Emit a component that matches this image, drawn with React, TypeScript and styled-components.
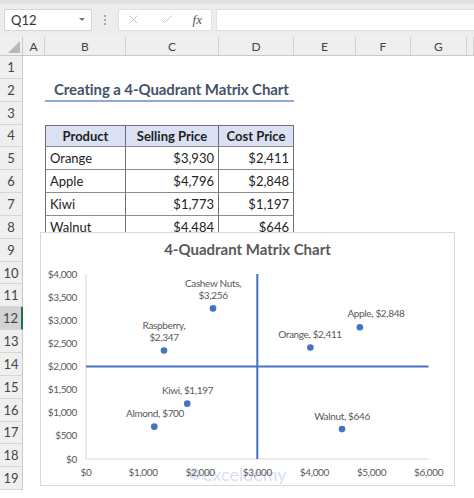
import { FC } from "react";
import styled, { createGlobalStyle } from "styled-components";
import { X, Check } from "lucide-react";

const GlobalStyle = createGlobalStyle`
  * { box-sizing: border-box; }
  body {
    margin: 0;
    font-family: Lato, "Open Sans", sans-serif;
    background: #fff;
  }
`;

const COLS = "23px 22px 81px 93px 75px 62px 55px 56px 1fr";
const ROW_H = 22.85;

const Sheet = styled.div`
  position: relative;
  width: 474px;
  height: 498px;
  overflow: hidden;
  background: #fff;
`;

const FormulaBar = styled.div`
  display: flex;
  align-items: center;
  height: 37px;
  padding: 2px 0 0 4px;
  background: linear-gradient(#e2e2e2 0 4px, #ededed 4px);
`;

const NameBox = styled.div`
  display: flex;
  align-items: center;
  justify-content: space-between;
  width: 88px;
  height: 22px;
  padding: 0 6px;
  background: #fff;
  border: 1px solid #d6d6d6;
  font-size: 13px;
  color: #333;
`;

const Caret = styled.span`
  width: 0;
  height: 0;
  border-left: 3px solid transparent;
  border-right: 3px solid transparent;
  border-top: 3px solid #777;
`;

const Grip = styled.div`
  width: 26px;
  display: flex;
  justify-content: center;
  > span {
    width: 2px;
    height: 11px;
    background: radial-gradient(circle, #a9a9a9 45%, transparent 55%) 0 0 / 2px 4px repeat-y;
  }
`;

const FxBox = styled.div`
  display: flex;
  align-items: center;
  justify-content: space-between;
  width: 94px;
  height: 22px;
  padding: 0 9px 0 7px;
  background: #fff;
  border: 1px solid #e0e0e0;
  color: #c3c3c3;
`;

const FxMark = styled.span`
  font-family: "Liberation Serif", serif;
  font-style: italic;
  font-size: 13px;
  color: #555;
`;

const FormulaInput = styled.div`
  flex: 1;
  height: 22px;
  margin-left: 4px;
  background: #fff;
  border: 1px solid #e0e0e0;
  border-right: none;
`;

const HeaderRow = styled.div`
  display: grid;
  grid-template-columns: ${COLS};
  height: 19px;
  background: #efefef;
  border-bottom: 1px solid #c9c9c9;
`;

const Corner = styled.div`
  position: relative;
  border-right: 1px solid #c9c9c9;
  &::after {
    content: "";
    position: absolute;
    right: 2px;
    bottom: 2px;
    border-left: 12px solid transparent;
    border-bottom: 12px solid #b9b9b9;
  }
`;

const ColHeader = styled.div`
  display: flex;
  align-items: center;
  justify-content: center;
  border-right: 1px solid #d2d2d2;
  font-size: 12px;
  color: #444;
`;

const Row = styled.div`
  display: grid;
  grid-template-columns: ${COLS};
  height: ${ROW_H}px;
`;

const RowHeader = styled.div<{ $active?: boolean }>`
  display: flex;
  align-items: center;
  justify-content: center;
  background: ${(p) => (p.$active ? "#d3d3d3" : "#efefef")};
  border-bottom: 1px solid #d6d6d6;
  border-right: ${(p) => (p.$active ? "2px solid #217346" : "1px solid #c9c9c9")};
  font-size: 13px;
  color: #444;
`;

const TitleCell = styled.div`
  grid-column: span 3;
  display: flex;
  align-items: center;
  padding-left: 9px;
  border-bottom: 2px solid #8ea9db;
  font-size: 15px;
  font-weight: 700;
  letter-spacing: -0.1px;
  color: #44546a;
`;

const TableCell = styled.div<{ $head?: boolean; $align?: "left" | "right" | "center"; $first?: boolean }>`
  display: flex;
  align-items: center;
  justify-content: ${(p) =>
    p.$align === "right" ? "flex-end" : p.$align === "center" ? "center" : "flex-start"};
  padding: 0 4px;
  background: ${(p) => (p.$head ? "#d9e1f2" : "#fff")};
  border-right: 1px solid #6f6f6f;
  border-bottom: 1px solid #8c8c8c;
  border-top: ${(p) => (p.$head ? "1px solid #6f6f6f" : "none")};
  border-left: ${(p) => (p.$first ? "1px solid #6f6f6f" : "none")};
  font-size: 13px;
  font-weight: ${(p) => (p.$head ? 700 : 400)};
  color: #222;
`;

const ChartBox = styled.div`
  position: absolute;
  left: 40px;
  top: 232px;
  width: 415px;
  height: 254px;
  background: #fff;
  border: 1px solid #d9d9d9;
`;

const ChartTitle = styled.div`
  height: 29px;
  padding-top: 4px;
  line-height: 25px;
  text-align: center;
  font-size: 15px;
  font-weight: 700;
  color: #595959;
`;

const products = [
  { name: "Orange", sell: "$3,930", cost: "$2,411" },
  { name: "Apple", sell: "$4,796", cost: "$2,848" },
  { name: "Kiwi", sell: "$1,773", cost: "$1,197" },
  { name: "Walnut", sell: "$4,484", cost: "$646" },
];

// scatter points: x = selling price, y = cost price, label baseline in chart space
const points = [
  { x: 2224, y: 3256, lines: ["Cashew Nuts,", "$3,256"], lx: 172, ly: 24.5 },
  { x: 1366, y: 2347, lines: ["Raspberry,", "$2,347"], lx: 123, ly: 66.5 },
  { x: 3930, y: 2411, lines: ["Orange, $2,411"], lx: 269, ly: 75.5 },
  { x: 4796, y: 2848, lines: ["Apple, $2,848"], lx: 335, ly: 54.5 },
  { x: 1773, y: 1197, lines: ["Kiwi, $1,197"], lx: 146.5, ly: 131.5 },
  { x: 1196, y: 700, lines: ["Almond, $700"], lx: 114, ly: 154.5 },
  { x: 4484, y: 646, lines: ["Walnut, $646"], lx: 301, ly: 157.5 },
];

const px = (v: number) => 45 + v * 0.0571;
const py = (v: number) => 197 - v * 0.04625;

const QuadrantChart: FC = () => {
  const yTicks = [4000, 3500, 3000, 2500, 2000, 1500, 1000, 500, 0];
  const xTicks = [0, 1000, 2000, 3000, 4000, 5000, 6000];
  const fmt = (v: number) => "$" + v.toLocaleString("en-US");
  return (
    <ChartBox>
      <ChartTitle>4-Quadrant Matrix Chart</ChartTitle>
      <svg
        width="413"
        height="223"
        fontFamily="Lato, sans-serif"
        fontSize="10"
        letterSpacing="-0.35"
        fill="#595959"
      >
        {/* faint publisher watermark */}
        <circle cx="154" cy="212" r="6" fill="#dbe3f1" opacity="0.8" />
        <text x="162" y="219" fontSize="18" fill="#ccd6ea" opacity="0.75" letterSpacing="0">
          exceldemy
        </text>
        <line x1={px(0)} y1={py(4000)} x2={px(0)} y2={py(0)} stroke="#d9d9d9" />
        <line x1={px(0)} y1={py(0)} x2={px(6000)} y2={py(0)} stroke="#d9d9d9" />
        {yTicks.map((t) => (
          <text key={t} x="36" y={py(t) + 3.5} textAnchor="end">
            {fmt(t)}
          </text>
        ))}
        {xTicks.map((t) => (
          <text key={t} x={px(t)} y="213.5" textAnchor="middle">
            {fmt(t)}
          </text>
        ))}
        <line x1={px(0)} y1={py(2000)} x2={px(6000)} y2={py(2000)} stroke="#4472c4" strokeWidth="2" />
        <line x1={px(3000)} y1={py(4000)} x2={px(3000)} y2={py(0)} stroke="#4472c4" strokeWidth="2" />
        {points.map((p) => (
          <g key={p.lines[0]}>
            <circle cx={px(p.x)} cy={py(p.y)} r="3.3" fill="#4472c4" />
            {p.lines.map((l, i) => (
              <text key={l} x={p.lx} y={p.ly + i * 12.5} textAnchor="middle">
                {l}
              </text>
            ))}
          </g>
        ))}
      </svg>
    </ChartBox>
  );
};

const App: FC = () => {
  const rows = Array.from({ length: 19 }, (_, i) => i + 1);
  return (
    <Sheet>
      <GlobalStyle />
      <FormulaBar>
        <NameBox>
          Q12
          <Caret />
        </NameBox>
        <Grip>
          <span />
        </Grip>
        <FxBox>
          <X size={15} strokeWidth={1.5} />
          <Check size={15} strokeWidth={1.5} />
          <FxMark>fx</FxMark>
        </FxBox>
        <FormulaInput />
      </FormulaBar>
      <HeaderRow>
        <Corner />
        {["A", "B", "C", "D", "E", "F", "G", ""].map((c, i) => (
          <ColHeader key={i}>{c}</ColHeader>
        ))}
      </HeaderRow>
      {rows.map((r) => {
        const item = r >= 5 && r <= 8 ? products[r - 5] : null;
        return (
          <Row key={r}>
            <RowHeader $active={r === 12}>{r}</RowHeader>
            <div />
            {r === 2 && <TitleCell>Creating a 4-Quadrant Matrix Chart</TitleCell>}
            {r === 4 && (
              <>
                <TableCell $head $first $align="center">Product</TableCell>
                <TableCell $head $align="center">Selling Price</TableCell>
                <TableCell $head $align="center">Cost Price</TableCell>
              </>
            )}
            {item && (
              <>
                <TableCell $first>{item.name}</TableCell>
                <TableCell $align="right">{item.sell}</TableCell>
                <TableCell $align="right">{item.cost}</TableCell>
              </>
            )}
          </Row>
        );
      })}
      <QuadrantChart />
    </Sheet>
  );
};

export default App;
